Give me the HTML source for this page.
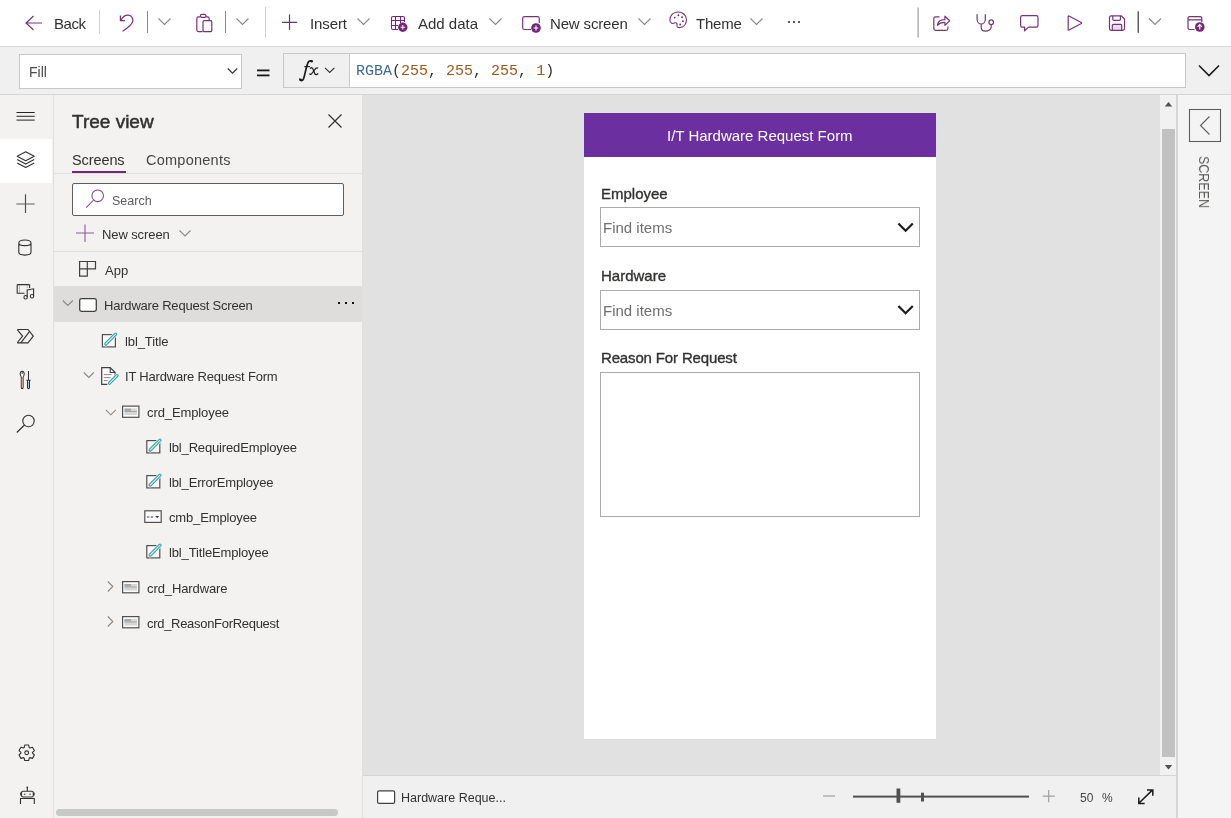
<!DOCTYPE html>
<html><head><meta charset="utf-8">
<style>
*{box-sizing:border-box;margin:0;padding:0}
html,body{width:1231px;height:818px;overflow:hidden;background:#fff;font-family:"Liberation Sans",sans-serif;color:#323130}
.a{position:absolute}
.t{position:absolute;white-space:nowrap;line-height:1;will-change:transform}
svg{position:absolute;overflow:visible}
.p{stroke:#773379;fill:none;stroke-width:1.2}
.k{stroke:#323130;fill:none;stroke-width:1.1}
</style></head><body>
<!-- TOP TOOLBAR -->
<div class="a" style="left:0;top:0;width:1231px;height:46px;background:#fff"></div>
<div class="a" style="left:0;top:46px;width:1231px;height:1px;background:#d8d8d8"></div>

<!-- FORMULA BAR -->
<div class="a" style="left:0;top:47px;width:1231px;height:47px;background:#f0f0f0"></div>
<div class="a" style="left:0;top:94px;width:1231px;height:1px;background:#d6d6d6"></div>


<!-- toolbar items -->
<svg style="left:0;top:0" width="1231" height="46">
 <!-- back arrow -->
 <path class="p" d="M33.5 16 L26 23 L33.5 30 M26 23 H42" stroke-width="1.3"/>
 <!-- sep -->
 <rect x="99" y="10" width="1" height="24" fill="#d2d0ce"/>
 <!-- undo -->
 <path class="p" d="M120.4 15.4 V20.6 H125" stroke-width="1.15"/>
 <path class="p" d="M120.9 20.2 C122.8 16.5 125.5 15 128.4 15.2 C131.5 15.5 133.2 18.2 132.8 21.2 C132.4 24 128.5 27.5 122.6 31.2" stroke-width="1.15"/>
 <rect x="147" y="11" width="1" height="22" fill="#8a8886"/>
 <path d="M158.5 18.5 L164.5 24.5 L170.5 18.5" stroke="#8a8886" fill="none" stroke-width="1.1"/>
 <!-- paste -->
 <path class="p" d="M202.5 31.7 H198.6 Q196.8 31.7 196.8 29.9 V18.7 Q196.8 16.9 198.6 16.9 H200.3 M206.1 16.9 H207.4 Q209.2 16.9 209.2 18.7 V20.3" stroke-width="1.15"/>
 <rect class="p" x="200.4" y="14.4" width="5.6" height="3" rx="1.4" stroke-width="1.15"/>
 <rect class="p" x="203" y="20.6" width="8.8" height="11.1" rx="1.3" stroke-width="1.15"/>
 <rect x="225" y="11" width="1" height="22" fill="#8a8886"/>
 <path d="M236.5 18.5 L242.5 24.5 L248.5 18.5" stroke="#8a8886" fill="none" stroke-width="1.1"/>
 <rect x="265" y="7" width="1" height="31" fill="#d2d0ce"/>
 <!-- plus -->
 <path d="M289.5 14.6 V30 M282 22.3 H297.2" stroke="#633a66" fill="none" stroke-width="1.2"/>
 <path d="M357.5 18.5 L363.5 24.5 L369.5 18.5" stroke="#8a8886" fill="none" stroke-width="1.1"/>
 <!-- add data -->
 <path d="M393 16.5 H403 Q404.5 16.5 404.5 18 V22 M393 16.5 Q391.5 16.5 391.5 18 V28 Q391.5 29.5 393 29.5 H398 M391.5 20.5 H404.5 M391.5 25.5 H398 M395.5 16.5 V29.5 M400.5 16.5 V23" stroke="#742774" fill="none" stroke-width="1.1"/>
 <circle cx="402.8" cy="27.3" r="4.7" fill="#742774"/>
 <path d="M402.8 25 V29.6 M400.5 27.3 H405.1" stroke="#f6e6f6" stroke-width="1.1"/>
 <path d="M489.5 18.5 L495.5 24.5 L501.5 18.5" stroke="#8a8886" fill="none" stroke-width="1.1"/>
 <!-- new screen -->
 <path class="p" d="M531 29.5 H524.5 Q522.7 29.5 522.7 27.7 V18.5 Q522.7 16.7 524.5 16.7 H537.5 Q539.3 16.7 539.3 18.5 V23" stroke-width="1.3"/>
 <circle cx="536" cy="28" r="4.8" fill="#742774"/>
 <path d="M536 25.6 V30.4 M533.6 28 H538.4" stroke="#fff" stroke-width="1.1"/>
 <path d="M638.5 18.5 L644.5 24.5 L650.5 18.5" stroke="#8a8886" fill="none" stroke-width="1.1"/>
 <!-- theme palette -->
 <g transform="translate(678.2 19.8) scale(0.92) translate(-678.3 -19.9)">
 <path class="p" d="M678 11.5 C672.5 11.5 669.3 15.5 669.3 20 C669.3 23.5 672 24.5 674 23.5 C676 22.5 677.5 23.5 677 25.5 C676.5 27.5 678 28.8 680.5 28.3 C684.5 27.5 687.3 24 687.3 19.8 C687.3 15 683.5 11.5 678 11.5 Z" stroke-width="1.2"/>
 <circle cx="674.5" cy="17.5" r="1" fill="#742774"/><circle cx="678.5" cy="15" r="1" fill="#742774"/><circle cx="682.5" cy="17" r="1" fill="#742774"/><circle cx="683.5" cy="21.5" r="1" fill="#742774"/><circle cx="680.5" cy="25" r="1" fill="#742774"/>
 </g>
 <path d="M750.5 18.5 L756.5 24.5 L762.5 18.5" stroke="#8a8886" fill="none" stroke-width="1.1"/>
 <circle cx="789" cy="22" r="1.1" fill="#323130"/><circle cx="794" cy="22" r="1.1" fill="#323130"/><circle cx="799" cy="22" r="1.1" fill="#323130"/>
 <rect x="917.5" y="7.5" width="1.2" height="30" fill="#a19f9d"/>
 <!-- share -->
 <path class="p" d="M939.5 16.8 H935.6 Q933.8 16.8 933.8 18.6 V28.6 Q933.8 30.4 935.6 30.4 H946.1 Q947.9 30.4 947.9 28.6 V26.6" stroke-width="1.15"/>
 <path class="p" d="M937.4 25.4 C937.9 21.6 940.6 19.6 944.9 19.7 V16.2 L949.7 20.8 L944.9 25.4 V22.3 C941.6 22.1 939.2 23.3 937.4 25.4 Z" stroke-width="1.1" stroke-linejoin="round"/>
 <!-- stethoscope -->
 <path class="p" d="M977.1 14.2 V19.2 C977.1 22 979 24 981.2 24 C983.4 24 985.3 22 985.3 19.2 V14.2 M981.2 24 V27.3 C981.2 29.6 983 31.2 985.6 31.2 C988.2 31.2 991.2 29.6 991.2 27.2 V24.6" stroke-width="1.15"/>
 <circle class="p" cx="991.2" cy="22.2" r="2.3" stroke-width="1.1"/>
 <!-- comment -->
 <path class="p" d="M1022.3 15.7 H1036.3 Q1038 15.7 1038 17.4 V25.4 Q1038 27.1 1036.3 27.1 H1028.6 L1024.6 30.8 V27.1 H1022.3 Q1020.6 27.1 1020.6 25.4 V17.4 Q1020.6 15.7 1022.3 15.7 Z" stroke-width="1.15" stroke-linejoin="round"/>
 <!-- play -->
 <path class="p" d="M1068.2 16.5 Q1068.2 15.6 1069 16 L1081.3 22.5 Q1082 23 1081.3 23.5 L1069 30 Q1068.2 30.4 1068.2 29.5 Z" stroke-width="1.2" stroke-linejoin="round"/>
 <!-- save -->
 <path d="M1112.5 24.5 H1121.5 V30.2 H1112.5 Z" fill="#eadcea"/>
 <path class="p" d="M1111.2 15.9 H1121.4 L1124.5 19 V28.6 Q1124.5 30.3 1122.8 30.3 H1111.2 Q1109.5 30.3 1109.5 28.6 V17.6 Q1109.5 15.9 1111.2 15.9 Z M1112.8 16 V19.2 Q1112.8 20.3 1113.9 20.3 H1119.3 Q1120.4 20.3 1120.4 19.2 V16 M1112.3 30.2 V25.3 Q1112.3 24.3 1113.3 24.3 H1120.7 Q1121.7 24.3 1121.7 25.3 V30.2" stroke-width="1.15"/>
 <rect x="1137.5" y="11.3" width="1.5" height="21.5" fill="#605e5c"/>
 <path d="M1149 18.5 L1155 24.5 L1161 18.5" stroke="#8a8886" fill="none" stroke-width="1.1"/>
 <!-- publish -->
 <path class="p" d="M1194.5 29.5 H1189.5 Q1188 29.5 1188 28 V18.1 Q1188 16.6 1189.5 16.6 H1200.3 Q1201.8 16.6 1201.8 18.1 V22 M1188 19.8 H1201.8" stroke-width="1.1"/>
 <circle cx="1199.8" cy="27" r="4.8" fill="#742774"/>
 <path d="M1199.8 29.6 V24.6 M1197.6 26.8 L1199.8 24.6 L1202 26.8" stroke="#fff" stroke-width="1.1" fill="none"/>
</svg>
<div class="t" style="left:54px;top:16px;font-size:15px;letter-spacing:-0.45px">Back</div>
<div class="t" style="left:310px;top:16px;font-size:15px;letter-spacing:-0.1px">Insert</div>
<div class="t" style="left:418px;top:16px;font-size:15px;letter-spacing:0px">Add data</div>
<div class="t" style="left:550px;top:16px;font-size:15px;letter-spacing:-0.15px">New screen</div>
<div class="t" style="left:696px;top:16px;font-size:15px;letter-spacing:-0.2px">Theme</div>

<!-- formula items -->
<div class="a" style="left:19px;top:54px;width:223px;height:35px;background:#fff;border:1px solid #c8c8c8"></div>
<div class="t" style="left:29px;top:65px;font-size:14px;color:#4a4a4a">Fill</div>

<div class="a" style="left:283px;top:53px;width:67px;height:35px;background:#f0f0f0;border:1px solid #c8c8c8"></div>
<svg style="left:0;top:0" width="360" height="95">
 <path d="M299.8 79.3 C300.8 81.2 302.6 81 303.6 78.6 C304.6 76 306.2 67 307.6 63.6 C308.6 61 310.2 60.3 312 61.2" stroke="#1b1b1b" fill="none" stroke-width="1.7" stroke-linecap="round"/>
 <circle cx="300.6" cy="79.8" r="1.3" fill="#1b1b1b"/><circle cx="311.6" cy="61.3" r="1.2" fill="#1b1b1b"/>
 <path d="M304.3 66.6 H310" stroke="#1b1b1b" stroke-width="1.1"/>
 <path d="M310.4 68.2 C311.8 67.2 312.8 68 313.4 70 L314.6 73.2 C315.2 74.8 316.4 75 317.8 73.8" stroke="#1b1b1b" fill="none" stroke-width="1.3" stroke-linecap="round"/>
 <path d="M317.6 68 C316.6 67.5 315.8 68 314.6 69.8 L312.2 73 C311.2 74.6 310.6 74.8 309.8 74" stroke="#1b1b1b" fill="none" stroke-width="1.2" stroke-linecap="round"/>
</svg>
<div class="a" style="left:349px;top:53px;width:837px;height:35px;background:#fff;border:1px solid #c8c8c8"></div>
<div class="t" style="left:356px;top:64px;font-family:'Liberation Mono',monospace;font-size:15px;color:#333"><span style="color:#3c6a96">RGBA</span>(<span style="color:#a0561c">255</span>, <span style="color:#a0561c">255</span>, <span style="color:#a0561c">255</span>, <span style="color:#a0561c">1</span>)</div>

<svg style="left:0;top:47px" width="1231" height="47">
 <path d="M227.8 21.5 L232.5 26.2 L237.2 21.5" stroke="#323130" fill="none" stroke-width="1.1"/>
 <rect x="257" y="22.5" width="12.5" height="1.8" fill="#1b1b1b"/>
 <rect x="257" y="27.5" width="12.5" height="1.8" fill="#1b1b1b"/>
 <path d="M325 20.8 L329.7 25.5 L334.4 20.8" stroke="#323130" fill="none" stroke-width="1.1"/>
 <path d="M1199 18.5 L1209 28.5 L1219 18.5" stroke="#1b1b1b" fill="none" stroke-width="1.6"/>
</svg>
<!-- LEFT RAIL -->
<div class="a" style="left:0;top:95px;width:53px;height:723px;background:#f3f2f1"></div>
<div class="a" style="left:53px;top:95px;width:1px;height:723px;background:#e1dfdd"></div>


<!-- rail items -->
<div class="a" style="left:0;top:139px;width:52px;height:44px;background:#fff"></div>
<svg style="left:0;top:0" width="53" height="818">
 <path d="M16.5 112.5 H34.7 M16.5 116.3 H34.7 M16.5 120.1 H34.7" stroke="#252423" stroke-width="1"/>
 <!-- layers -->
 <path class="k" d="M25.7 151.8 L34.2 156.3 L25.7 160.8 L17.2 156.3 Z M17.2 159.6 L25.7 164.1 L34.2 159.6 M17.2 162.9 L25.7 167.4 L34.2 162.9" stroke-width="1.1" stroke-linejoin="round"/>
 <!-- plus -->
 <path d="M25.5 194.5 V213 M16.3 204 H34.6" stroke="#605e5c" stroke-width="1.1"/>
 <path d="M25.5 194.5 V213" stroke="#6a3c6a" stroke-width="1.1"/>
 <!-- database -->
 <path class="k" d="M18.8 243 V252.3 C18.8 256 31 256 31 252.3 V243 M18.8 243 C18.8 239 31 239 31 243 C31 246.5 18.8 246.5 18.8 243" stroke-width="1.1"/>
 <!-- media -->
 <path d="M17.2 284.6 H29.6 M17.2 284.6 V293.2 H24.5 M29.6 284.6 V288" stroke="#323130" fill="none" stroke-width="1.1"/>
 <path d="M19.5 285.5 V292.5 M27.3 285.5 V288" stroke="#605e5c" fill="none" stroke-width="0.8" stroke-dasharray="1 1"/>
 <path d="M27.2 297 V290 L33.6 288.8 V296" stroke="#323130" fill="none" stroke-width="1.1"/>
 <circle cx="25.6" cy="297.3" r="1.7" stroke="#323130" fill="none" stroke-width="1.05"/>
 <circle cx="32" cy="296.3" r="1.7" stroke="#323130" fill="none" stroke-width="1.05"/>
 <!-- automate -->
 <path d="M18.2 329.5 H28 L33.3 336.2 L28 342.9 H18.2 Q17.2 342.9 17.8 342 L22.6 336.2 L17.8 330.4 Q17.2 329.5 18.2 329.5 Z" stroke="#323130" fill="none" stroke-width="1.15" stroke-linejoin="round"/>
 <path d="M20.8 342.9 L29.8 331.2" stroke="#323130" fill="none" stroke-width="1.1"/>
 <!-- tools -->
 <path d="M21.3 377 V387.6 Q21.3 388.6 22.2 388.6 Q23.1 388.6 23.1 387.6 V377 M21.3 377 Q19.8 375.5 20.2 373.2 Q20.6 371.2 22.2 371.2 Q23.8 371.2 24.2 373.2 Q24.6 375.5 23.1 377" stroke="#323130" fill="none" stroke-width="1.05"/>
 <path d="M22.2 371.5 V374" stroke="#323130" stroke-width="0.9"/>
 <path d="M28.5 371 V379.8 M26.4 380.3 H30.6 M27.5 380.5 V387.6 Q27.5 388.6 28.5 388.6 Q29.5 388.6 29.5 387.6 V380.5" stroke="#323130" fill="none" stroke-width="1.05"/>
 <path d="M22.2 378 V387.5" stroke="#d9a26c" stroke-width="0.7"/>
 <path d="M28.5 381.5 V387.5" stroke="#7fb0d8" stroke-width="0.7"/>
 <!-- search -->
 <circle class="k" cx="28.5" cy="421" r="5.7" stroke-width="1.2"/>
 <path d="M24.5 425 L16.8 432.5" stroke="#323130" stroke-width="1.2"/>
 <!-- settings gear -->
 <path class="k" d="M24.16 747.59 L24.76 745.04 L28.64 745.04 L29.24 747.59 L29.94 747.99 L32.45 747.24 L34.39 750.59 L32.49 752.40 L32.49 753.20 L34.39 755.01 L32.45 758.36 L29.94 757.61 L29.24 758.01 L28.64 760.56 L24.76 760.56 L24.16 758.01 L23.46 757.61 L20.95 758.36 L19.01 755.01 L20.91 753.20 L20.91 752.40 L19.01 750.59 L20.95 747.24 L23.46 747.99 Z" stroke-width="1.1" stroke-linejoin="round"/>
 <circle class="k" cx="26.7" cy="752.8" r="1.9" stroke-width="1.1"/>
 <!-- robot -->
 <path class="k" d="M27.3 787.5 V791 M23 791.3 H31.8 Q33.3 791.3 33.3 792.8 V795.5 Q33.3 797 31.8 797 H23 Q21.5 797 21.5 795.5 V792.8 Q21.5 791.3 23 791.3 Z M20.5 804 V798.5 H34.3 V804" stroke-width="1.2"/>
 <circle cx="27.3" cy="787.3" r="0.9" fill="#323130"/>
 <circle cx="24.8" cy="794.2" r="0.7" fill="#323130"/><circle cx="30" cy="794.2" r="0.7" fill="#323130"/>
 <rect x="20.2" y="792.5" width="1.3" height="3" fill="#323130"/><rect x="33.3" y="792.5" width="1.3" height="3" fill="#323130"/>
</svg>

<!-- TREE PANEL -->
<div class="a" style="left:54px;top:95px;width:308px;height:723px;background:#f3f2f1"></div>
<div class="a" style="left:362px;top:95px;width:1px;height:723px;background:#e1dfdd"></div>


<!-- tree content -->
<div class="t" style="left:72px;top:112px;font-size:19px;-webkit-text-stroke:0.5px #323130;color:#323130">Tree view</div>
<svg style="left:54px;top:95px" width="308" height="723">
 <path d="M274.5 19.5 L287.5 32.5 M287.5 19.5 L274.5 32.5" stroke="#323130" stroke-width="1.2"/>
 <rect x="18" y="76" width="54" height="2" fill="#742774"/>
 <rect x="0" y="78" width="308" height="1" fill="#e1dfdd"/>
 <rect x="0" y="156" width="308" height="1" fill="#e1dfdd"/>
</svg>
<div class="t" style="left:72px;top:153px;font-size:14.5px;letter-spacing:-0.1px;color:#323130">Screens</div>
<div class="t" style="left:146px;top:153px;font-size:14.5px;letter-spacing:0.25px;color:#484644">Components</div>
<div class="a" style="left:72px;top:183px;width:272px;height:33px;background:#fff;border:1px solid #605e5c;border-radius:2px"></div>
<svg style="left:0;top:0" width="362" height="818">
 <circle cx="97.7" cy="195.8" r="5.8" stroke="#7b4b82" fill="none" stroke-width="1.05"/>
 <path d="M93.6 200 L86.2 207.6" stroke="#7b4b82" stroke-width="1.05"/>
 <path d="M85 224.5 V242 M76 233 H94" stroke="#8a5f95" stroke-width="1.1"/>
 <path d="M179.5 230.5 L185 236 L190.5 230.5" stroke="#8a8886" fill="none" stroke-width="1.1"/>
</svg>
<div class="t" style="left:112px;top:195px;font-size:12.5px;color:#605e5c">Search</div>
<div class="t" style="left:102px;top:228px;font-size:13px;letter-spacing:-0.1px;color:#323130">New screen</div>

<!-- rows -->
<div class="a" style="left:54px;top:286px;width:308px;height:36px;background:#dedddc"></div>
<svg style="left:0;top:0" width="362" height="818">
 <path d="M79.6 261.5 H95.5 V268.8 H87.3 V276.2 H79.6 Z M79.6 268.8 H87.3 M87.3 261.5 V268.8" stroke="#404040" fill="none" stroke-width="1.2"/>
 <path d="M62.8 300.5 L67.8 305.5 L72.8 300.5" stroke="#8a8886" fill="none" stroke-width="1.1"/>
 <rect x="79.7" y="298.6" width="16.6" height="12.8" rx="1.8" stroke="#404040" fill="#fff" stroke-width="1.3"/>
 <rect x="338" y="302" width="2" height="2" fill="#111"/><rect x="345" y="302" width="2" height="2" fill="#111"/><rect x="352" y="302" width="2" height="2" fill="#111"/>
 <rect x="102.4" y="334.6" width="13" height="12.3" fill="#fafafa" stroke="#505050" stroke-width="1.2"/><path d="M105.8 344.0 L115.6 334.2" stroke="#f3f2f1" stroke-width="4.6" stroke-linecap="round"/><path d="M105.8 344.0 L115.6 334.2" stroke="#36a3a6" stroke-width="3.2" stroke-linecap="round"/><path d="M105.8 344.0 L115.6 334.2" stroke="#d5f0f0" stroke-width="1.1" stroke-linecap="round"/>
 <path d="M83.8 372.5 L88.8 377.5 L93.8 372.5" stroke="#8a8886" fill="none" stroke-width="1.1"/>
 <path d="M107.5 384.3 H101.7 V367.6 H110.2 L115.1 372.5 V376.5" stroke="#404040" fill="#fafafa" stroke-width="1.2"/>
 <path d="M110.2 367.6 V372.5 H115.1" stroke="#404040" fill="none" stroke-width="1.1"/>
 <path d="M103.8 374.6 H111.5 M103.8 377.6 H110.5 M103.8 380.6 H107.5" stroke="#8a8a8a" stroke-width="1"/>
 <path d="M109.5 383.2 L117 375.7" stroke="#f3f2f1" stroke-width="4.6" stroke-linecap="round"/>
 <path d="M109.5 383.2 L117 375.7" stroke="#36a3a6" stroke-width="3.3" stroke-linecap="round"/>
 <path d="M109.5 383.2 L117 375.7" stroke="#d5f0f0" stroke-width="1.1" stroke-linecap="round"/>
 <path d="M105.8 409.8 L110.8 414.8 L115.8 409.8" stroke="#8a8886" fill="none" stroke-width="1.1"/>
 <rect x="122.6" y="406.1" width="16.3" height="11.2" fill="#fbfbfb" stroke="#505050" stroke-width="1.2"/><rect x="124.5" y="408.5" width="12.5" height="6.5" fill="#d6d6d6"/><rect x="124.5" y="408.5" width="6.5" height="2.5" fill="#a8a8a8"/><rect x="124.5" y="411.0" width="12.5" height="1" fill="#a8a8a8"/>
 <rect x="146.8" y="440.6" width="13" height="12.3" fill="#fafafa" stroke="#505050" stroke-width="1.2"/><path d="M150.2 450.0 L160.0 440.2" stroke="#f3f2f1" stroke-width="4.6" stroke-linecap="round"/><path d="M150.2 450.0 L160.0 440.2" stroke="#36a3a6" stroke-width="3.2" stroke-linecap="round"/><path d="M150.2 450.0 L160.0 440.2" stroke="#d5f0f0" stroke-width="1.1" stroke-linecap="round"/><rect x="146.8" y="475.6" width="13" height="12.3" fill="#fafafa" stroke="#505050" stroke-width="1.2"/><path d="M150.2 485.0 L160.0 475.2" stroke="#f3f2f1" stroke-width="4.6" stroke-linecap="round"/><path d="M150.2 485.0 L160.0 475.2" stroke="#36a3a6" stroke-width="3.2" stroke-linecap="round"/><path d="M150.2 485.0 L160.0 475.2" stroke="#d5f0f0" stroke-width="1.1" stroke-linecap="round"/>
 <rect x="144.8" y="510.8" width="16.4" height="11.6" fill="#fafafa" stroke="#505050" stroke-width="1.2"/>
 <path d="M147 517 H149.3 M150.8 517 H153.1" stroke="#404040" stroke-width="1.1"/>
 <path d="M155.2 516 L157.2 518.2 L159.2 516 Z" fill="#404040"/>
 <rect x="146.8" y="545.6" width="13" height="12.3" fill="#fafafa" stroke="#505050" stroke-width="1.2"/><path d="M150.2 555.0 L160.0 545.2" stroke="#f3f2f1" stroke-width="4.6" stroke-linecap="round"/><path d="M150.2 555.0 L160.0 545.2" stroke="#36a3a6" stroke-width="3.2" stroke-linecap="round"/><path d="M150.2 555.0 L160.0 545.2" stroke="#d5f0f0" stroke-width="1.1" stroke-linecap="round"/>
 <path d="M107.8 581.5 L112.8 586.5 L107.8 591.5" stroke="#8a8886" fill="none" stroke-width="1.1"/>
 <rect x="122.6" y="581.6" width="16.3" height="11.2" fill="#fbfbfb" stroke="#505050" stroke-width="1.2"/><rect x="124.5" y="584.0" width="12.5" height="6.5" fill="#d6d6d6"/><rect x="124.5" y="584.0" width="6.5" height="2.5" fill="#a8a8a8"/><rect x="124.5" y="586.5" width="12.5" height="1" fill="#a8a8a8"/>
 <path d="M107.8 616.5 L112.8 621.5 L107.8 626.5" stroke="#8a8886" fill="none" stroke-width="1.1"/>
 <rect x="122.6" y="616.6" width="16.3" height="11.2" fill="#fbfbfb" stroke="#505050" stroke-width="1.2"/><rect x="124.5" y="619.0" width="12.5" height="6.5" fill="#d6d6d6"/><rect x="124.5" y="619.0" width="6.5" height="2.5" fill="#a8a8a8"/><rect x="124.5" y="621.5" width="12.5" height="1" fill="#a8a8a8"/>
</svg>
<div class="t" style="left:105px;top:264px;font-size:13px;color:#323130">App</div>
<div class="t" style="left:104px;top:299px;font-size:13px;letter-spacing:-0.2px;color:#323130">Hardware Request Screen</div>
<div class="t" style="left:125px;top:335px;font-size:13px;letter-spacing:-0.1px;color:#323130">lbl_Title</div>
<div class="t" style="left:125px;top:370px;font-size:13px;letter-spacing:-0.2px;color:#323130">IT Hardware Request Form</div>
<div class="t" style="left:147px;top:406px;font-size:13px;letter-spacing:-0.1px;color:#323130">crd_Employee</div>
<div class="t" style="left:169px;top:441px;font-size:13px;letter-spacing:-0.15px;color:#323130">lbl_RequiredEmployee</div>
<div class="t" style="left:169px;top:476px;font-size:13px;letter-spacing:-0.15px;color:#323130">lbl_ErrorEmployee</div>
<div class="t" style="left:169px;top:511px;font-size:13px;letter-spacing:-0.15px;color:#323130">cmb_Employee</div>
<div class="t" style="left:169px;top:546px;font-size:13px;letter-spacing:-0.15px;color:#323130">lbl_TitleEmployee</div>
<div class="t" style="left:147px;top:582px;font-size:13px;letter-spacing:-0.1px;color:#323130">crd_Hardware</div>
<div class="t" style="left:147px;top:617px;font-size:13px;letter-spacing:-0.3px;color:#323130">crd_ReasonForRequest</div>
<!-- tree h scrollbar -->
<div class="a" style="left:56px;top:809px;width:282px;height:7px;background:#c8c8c8;border-radius:4px"></div>

<!-- CANVAS -->
<div class="a" style="left:363px;top:95px;width:797px;height:680px;background:#e1e1e1"></div>
<div class="a" style="left:1160px;top:95px;width:16px;height:680px;background:#f1f1f1"></div>
<div class="a" style="left:1162px;top:129px;width:13px;height:628px;background:#c1c1c1"></div>
<div class="a" style="left:363px;top:775px;width:813px;height:1px;background:#d6d6d6"></div>
<div class="a" style="left:363px;top:776px;width:813px;height:42px;background:#f0f0f0"></div>

<!-- RIGHT PANEL -->
<div class="a" style="left:1176px;top:95px;width:2px;height:723px;background:#d6d6d6"></div>
<div class="a" style="left:1178px;top:95px;width:53px;height:723px;background:#f4f4f4"></div>


<!-- screen -->
<div class="a" style="left:584px;top:739px;width:352px;height:1px;background:#d9d9d9"></div>
<div class="a" style="left:584px;top:113px;width:352px;height:626px;background:#fff"></div>
<div class="a" style="left:584px;top:113px;width:352px;height:44px;background:#6b2fa0"></div>
<div class="t" style="left:667px;top:128px;font-size:15px;color:#fff">I/T Hardware Request Form</div>
<div class="t" style="left:601px;top:186px;font-size:15px;-webkit-text-stroke:0.35px #323130;color:#323130">Employee</div>
<div class="a" style="left:600px;top:207px;width:320px;height:40px;border:1px solid #ababab;background:#fff"></div>
<div class="t" style="left:603px;top:220px;font-size:15px;color:#6e6e6e">Find items</div>
<div class="t" style="left:601px;top:268px;font-size:15px;-webkit-text-stroke:0.35px #323130;color:#323130">Hardware</div>
<div class="a" style="left:600px;top:290px;width:320px;height:40px;border:1px solid #ababab;background:#fff"></div>
<div class="t" style="left:603px;top:303px;font-size:15px;color:#6e6e6e">Find items</div>
<div class="t" style="left:601px;top:350px;font-size:15px;letter-spacing:-0.15px;-webkit-text-stroke:0.35px #323130;color:#323130">Reason For Request</div>
<div class="a" style="left:600px;top:372px;width:320px;height:145px;border:1px solid #ababab;background:#fff"></div>
<svg style="left:0;top:0" width="1231" height="818">
 <path d="M898.4 223.5 L905.6 230.7 L912.8 223.5" stroke="#1b1b1b" fill="none" stroke-width="2.2"/>
 <path d="M898.4 306 L905.6 313.2 L912.8 306" stroke="#1b1b1b" fill="none" stroke-width="2.2"/>
 <path d="M1164.8 106.5 L1168.5 102 L1172.2 106.5 Z" fill="#505050"/>
 <path d="M1164.8 765 L1168.5 769.5 L1172.2 765 Z" fill="#505050"/>
 <!-- bottom bar -->
 <rect x="377.6" y="790.8" width="17" height="12.6" rx="1.5" stroke="#404040" fill="#fff" stroke-width="1.2"/>
 <path d="M823 796 H835" stroke="#a19f9d" stroke-width="1.2"/>
 <rect x="853" y="795.6" width="176" height="2" fill="#505050"/>
 <rect x="896.5" y="788.5" width="3.8" height="14.3" fill="#505050"/>
 <rect x="921" y="792.7" width="3" height="8.8" fill="#505050"/>
 <path d="M1048.7 790 V802.3 M1042.6 796.2 H1054.8" stroke="#a19f9d" stroke-width="1.2"/>
 <path d="M1138.8 803.2 L1152.6 789.9 M1147 790 H1152.8 V795.8 M1138.8 797.5 V803.4 H1144.6" stroke="#1b1b1b" fill="none" stroke-width="1.5"/>
 <!-- right panel -->
 <rect x="1189.5" y="109.5" width="31" height="32" stroke="#605e5c" fill="none" stroke-width="1.1"/>
 <path d="M1209.5 116.5 L1200.5 125.5 L1209.5 134.5" stroke="#605e5c" fill="none" stroke-width="1.1"/>
</svg>
<div class="t" style="left:401px;top:792px;font-size:12.5px;letter-spacing:0px;color:#323130">Hardware Reque...</div>
<div class="t" style="left:1080px;top:792px;font-size:12px;color:#484644">50</div>
<div class="t" style="left:1102px;top:792px;font-size:12px;color:#484644">%</div>
<div class="t" style="left:1212px;top:156px;font-size:15px;color:#605e5c;transform-origin:0 0;transform:rotate(90deg) scaleX(0.83)">SCREEN</div>

</body></html>
